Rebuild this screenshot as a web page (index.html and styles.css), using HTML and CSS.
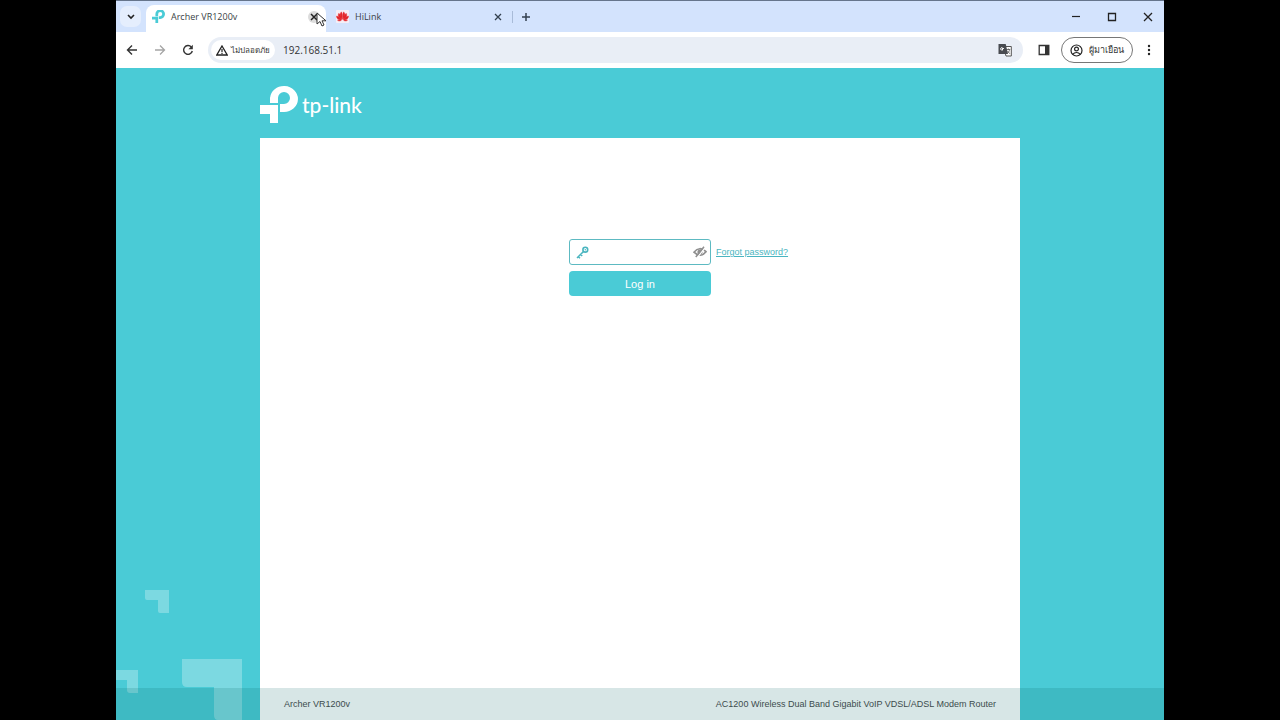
FILE: index.html
```html
<!DOCTYPE html>
<html lang="en">
<head>
    <meta charset="UTF-8">
    <meta name="viewport" content="width=device-width, initial-scale=1.0">
    <title>Archer VR1200v</title>
    <link rel="stylesheet" href="styles.css">
</head>
<body>
    <div class="window">
        <header class="tab-bar">
            <button class="tab-search" aria-label="Search tabs">
                <svg width="8" height="6" viewBox="0 0 8 6"><path d="M1 1l3 3 3-3" fill="none" stroke="#222" stroke-width="1.6"/></svg>
            </button>
            <div class="tab active">
                <svg class="favicon" viewBox="0 0 38 38"><path d="M10 18V12A14 14 0 1 1 24 26H20V18H24A6 6 0 1 0 18 12V18ZM0 20H18V38H10V28H0Z" fill="#4acbd6"/></svg>
                <span class="tab-title">Archer VR1200v</span>
                <button class="tab-close hovered" aria-label="Close tab">
                    <svg width="8" height="8" viewBox="0 0 8 8"><path d="M1 1l6 6M7 1l-6 6" stroke="#222" stroke-width="1.5"/></svg>
                </button>
                <svg class="cursor" width="11" height="16" viewBox="0 0 11 16"><path d="M1 1v11l3-2.500 2 4.500 2-1-2-4.200h4z" fill="#fff" stroke="#333" stroke-width="1"/></svg>
            </div>
            <div class="tab">
                <svg class="favicon" viewBox="0 0 14 14">
                    <rect width="14" height="14" rx="1" fill="#f6eef6"/>
                    <g fill="#e3262b" stroke="#e3262b" stroke-width=".4">
                        <path d="M6.700 10C4 7 3.600 4 5.800 2 7 4 7 7 6.700 10z"/>
                        <path d="M7.300 10C10 7 10.400 4 8.200 2 7 4 7 7 7.300 10z"/>
                        <path d="M6.200 10.200C3 9 1.500 6 3 3.500 5 5 6 8 6.200 10.200z"/>
                        <path d="M7.800 10.200C11 9 12.500 6 11 3.500 9 5 8 8 7.800 10.200z"/>
                        <path d="M5.900 10.700C3 11 .5 9.500.5 6.500 3 7 5 9 5.900 10.700z"/>
                        <path d="M8.100 10.700C11 11 13.500 9.500 13.500 6.500 11 7 9 9 8.100 10.700z"/>
                        <path d="M5.800 11C4 12.500 2.500 12 1.500 10.800z"/>
                        <path d="M8.200 11C10 12.500 11.500 12 12.500 10.800z"/>
                    </g>
                </svg>
                <span class="tab-title">HiLink</span>
                <button class="tab-close" aria-label="Close tab">
                    <svg width="8" height="8" viewBox="0 0 8 8"><path d="M1 1l6 6M7 1l-6 6" stroke="#33404f" stroke-width="1.3"/></svg>
                </button>
            </div>
            <button class="new-tab" aria-label="New tab">
                <svg width="10" height="10" viewBox="0 0 10 10"><path d="M5 1v8M1 5h8" stroke="#33404f" stroke-width="1.5"/></svg>
            </button>
            <div class="window-controls">
                <button aria-label="Minimize"><svg width="10" height="10" viewBox="0 0 10 10"><path d="M1 4.500h8" stroke="#222" stroke-width="1.200"/></svg></button>
                <button aria-label="Maximize"><svg width="10" height="10" viewBox="0 0 10 10"><path d="M1.500 1.500h7v7h-7z" fill="none" stroke="#222" stroke-width="1.300"/></svg></button>
                <button aria-label="Close"><svg width="10" height="10" viewBox="0 0 10 10"><path d="M1 1l8 8M9 1l-8 8" stroke="#222" stroke-width="1.300"/></svg></button>
            </div>
        </header>

        <div class="toolbar">
            <button class="tool" aria-label="Back"><svg width="12" height="12" viewBox="0 0 12 12"><path d="M11 6H2M6 1.500L1.500 6 6 10.500" fill="none" stroke="#333" stroke-width="1.400"/></svg></button>
            <button class="tool" aria-label="Forward"><svg width="12" height="12" viewBox="0 0 12 12"><path d="M1 6h9M6 1.500L10.500 6 6 10.500" fill="none" stroke="#a5a5a5" stroke-width="1.300"/></svg></button>
            <button class="tool" aria-label="Reload"><svg width="12" height="12" viewBox="0 0 12 12"><path d="M10.300 7A4.400 4.400 0 1 1 9.300 3" fill="none" stroke="#333" stroke-width="1.400"/><path d="M10.800.8v4.400H6.400z" fill="#333"/></svg></button>
            <div class="address-bar">
                <button class="site-info">
                    <svg width="12" height="11" viewBox="0 0 12 11"><path d="M6 1L11.200 10H.8z" fill="none" stroke="#222" stroke-width="1.300"/><path d="M6 4v3M6 7.700v1.200" stroke="#222" stroke-width="1.200"/></svg>
                    <span>ไม่ปลอดภัย</span>
                </button>
                <input class="url" type="text" value="192.168.51.1" aria-label="Address">
                <button class="translate" aria-label="Translate this page">
                    <svg width="14" height="14" viewBox="0 0 14 14"><path d="M5.500 3.500h7.800v9.500H8z" fill="#fff" stroke="#555"/><path d="M.5 1h7.200l2.300 10H.5z" fill="#484b50"/><path d="M6 5.500H4v1h1a1.300 1.300 0 1 1-.5-1.800" fill="none" stroke="#fff" stroke-width=".9"/><path d="M8.500 6.500h3.800M10.400 5.500v1M11.500 6.500c0 1.500-1 2.700-2 3.600M9.500 8l2.400 2.800" fill="none" stroke="#555" stroke-width=".8"/></svg>
                </button>
            </div>
            <button class="side-panel" aria-label="Side panel"><svg width="12" height="12" viewBox="0 0 12 12"><path d="M1.200 1.500h9.600v9H1.200z" fill="none" stroke="#333" stroke-width="1.300"/><path d="M7 1h4v10H7z" fill="#333"/></svg></button>
            <button class="profile">
                <svg width="13" height="13" viewBox="0 0 13 13"><g fill="none" stroke="#222" stroke-width="1.200"><circle cx="6.500" cy="6.500" r="5.500"/><circle cx="6.500" cy="5" r="1.900"/><path d="M2.800 10.300c1.700-2.400 5.700-2.400 7.400 0"/></g></svg>
                <span>ผู้มาเยือน</span>
            </button>
            <button class="menu" aria-label="Menu"><svg width="4" height="12" viewBox="0 0 4 12"><g fill="#222"><circle cx="2" cy="2" r="1.200"/><circle cx="2" cy="6" r="1.200"/><circle cx="2" cy="10" r="1.200"/></g></svg></button>
        </div>

        <div class="page">
            <svg class="pattern" width="130" height="134" viewBox="0 0 130 134" aria-hidden="true">
                <g fill="#fff" fill-opacity=".28">
                    <path d="M29 4H53V27H44Q42 27 42 25V14H31Q29 14 29 12Z"/>
                    <path d="M0 84H22V107H14Q11 107 11 104V94H0Z"/>
                    <path d="M66 73H126V134H102Q98 134 98 129V101H71Q66 101 66 96Z"/>
                </g>
            </svg>
            <div class="container">
                <h1 class="logo">
                    <svg width="38" height="38" viewBox="0 0 38 38" aria-hidden="true"><path d="M10 18V13A14 13 0 1 1 24 27H20V19H24A6 6 0 1 0 18 13V18ZM0 20H18V38H10V29H0Z" fill="#fff"/></svg>
                    <span>tp-link</span>
                </h1>
                <main class="panel">
                    <form class="login">
                        <div class="password">
                            <svg class="key" width="13" height="13" viewBox="0 0 13 13"><circle cx="9.300" cy="3.700" r="2.400" fill="none" stroke="#4ab5bf" stroke-width="1.600"/><circle cx="9.300" cy="3.700" r=".7" fill="#4ab5bf"/><path d="M7.500 5.500L1 12M2.300 10.700l1.700 1.500M4.600 8.400l1.600 1.600" fill="none" stroke="#4ab5bf" stroke-width="1.500"/></svg>
                            <input type="password" id="password" aria-label="Password">
                            <button type="button" class="show" id="showPassword" aria-label="Show password">
                                <svg width="14" height="12" viewBox="0 0 14 12"><path d="M1 6.200Q6.500-.5 13 5.700 7.500 12.500 1 6.200z" fill="none" stroke="#8f8f8f" stroke-width="1.700"/><circle cx="7" cy="6" r="2.600" fill="#8f8f8f"/><path d="M4.200 11.500L12.300 1.500" stroke="#fff" stroke-width="1.200"/><path d="M2.800 11L11 .8" stroke="#8f8f8f" stroke-width="1.500"/></svg>
                            </button>
                        </div>
                        <a class="forgot" href="#">Forgot password?</a>
                        <button type="submit" class="submit">Log in</button>
                    </form>
                </main>
            </div>
            <footer class="footer">
                <div class="footer-inner">
                    <span>Archer VR1200v</span>
                    <span>AC1200 Wireless Dual Band Gigabit VoIP VDSL/ADSL Modem Router</span>
                </div>
            </footer>
        </div>
    </div>

    <script>
        // Toggle password visibility
        document.getElementById('showPassword').addEventListener('click', function() {
            const input = document.getElementById('password');
            input.type = input.type === 'password' ? 'text' : 'password';
        });
    </script>
</body>
</html>
```

FILE: styles.css
```css
* {
    margin: 0;
    padding: 0;
    box-sizing: border-box;
}

body {
    background: #000;
    font-family: "Liberation Sans", Arial, sans-serif;
    font-size: 9px;
}

button {
    display: flex;
    align-items: center;
    justify-content: center;
    border: none;
    background: none;
    font-family: inherit;
    cursor: pointer;
}

input {
    border: none;
    outline: none;
    background: none;
    min-width: 0;
}

svg {
    display: block;
    flex-shrink: 0;
}

.window {
    display: flex;
    flex-direction: column;
    min-height: 100vh;
    margin: 0 116px;
}

/* Browser tabs */
.tab-bar,
.toolbar {
    display: flex;
    align-items: center;
    font-family: "Open Sans", "Noto Sans", sans-serif;
    color: #3a3f45;
}

.tab-bar {
    height: 32px;
    background: #d3e3fd;
    border-top: 1px solid #66758c;
}

.tab-search {
    width: 21px;
    height: 21px;
    margin: 0 5px 0 4px;
    border-radius: 7px;
    background: #e5eefd;
}

.tab {
    position: relative;
    display: flex;
    align-items: center;
    width: 184px;
    height: 31px;
    padding: 0 6px 0 10px;
}

.tab.active {
    width: 180px;
    height: 27px;
    margin-top: 4px;
    padding: 0 6px 4px;
    background: #fff;
    border-radius: 8px 8px 0 0;
}

.favicon {
    width: 13px;
    height: 13px;
    margin-right: 6px;
}

.tab-title {
    flex: 1;
}

.tab-close {
    width: 12px;
    height: 12px;
    border-radius: 50%;
}

.tab-close.hovered {
    background: #dcdcdc;
}

.cursor {
    position: absolute;
    left: 170px;
    top: 7px;
    z-index: 1;
}

.new-tab {
    height: 12px;
    margin-left: 2px;
    padding-left: 8px;
    border-left: 1px solid #a8bbd8;
}

.window-controls {
    display: flex;
    gap: 26px;
    margin-left: auto;
    padding-right: 11px;
}

/* Address bar */
.toolbar {
    height: 36px;
    padding: 0 13px 0 10px;
    background: #fff;
}

.tool {
    width: 12px;
    height: 12px;
    margin-right: 16px;
}

.address-bar {
    display: flex;
    flex: 1;
    align-items: center;
    height: 26px;
    margin-left: -2px;
    padding: 0 11px 0 3px;
    border-radius: 13px;
    background: #e9eef6;
}

.site-info {
    gap: 3px;
    height: 20px;
    padding: 0 5px;
    border-radius: 10px;
    background: #fff;
    color: #333;
    font-size: 8px;
}

.url {
    flex: 1;
    margin-left: 8px;
    font-family: inherit;
    font-size: 10px;
    color: #333;
}

.side-panel {
    margin: 0 11px 0 15px;
}

.profile {
    gap: 6px;
    height: 26px;
    padding: 0 8px;
    border: 1px solid #777;
    border-radius: 13px;
    color: #333;
    font-size: 9px;
}

.menu {
    margin-left: 14px;
}

/* Router login page */
.page {
    position: relative;
    display: flex;
    flex: 1;
    justify-content: center;
    background: #4acbd6;
}

.pattern {
    position: absolute;
    left: 0;
    bottom: 0;
}

.container {
    display: flex;
    flex-direction: column;
    width: 760px;
}

.logo {
    display: flex;
    align-items: center;
    gap: 4px;
    height: 70px;
    padding-top: 2px;
    color: #fff;
    font-family: Lato, sans-serif;
    font-size: 21px;
    font-weight: 500;
}

.panel {
    flex: 1;
    padding: 101px 16px 32px;
    background: #fff;
}

.login {
    display: grid;
    grid-template-columns: 1fr 142px 1fr;
    row-gap: 6px;
    column-gap: 5px;
    align-items: center;
}

.password {
    display: flex;
    grid-column: 2;
    align-items: center;
    height: 26px;
    padding: 0 3px 0 6px;
    border: 1px solid #5dbac2;
    border-radius: 3px;
}

.password input {
    flex: 1;
    height: 20px;
    padding: 0 4px;
}

.forgot {
    color: #4ab5c0;
}

.submit {
    grid-column: 2;
    height: 25px;
    border-radius: 4px;
    background: #4acbd6;
    color: #fff;
    font-size: 11px;
}

.footer {
    position: absolute;
    left: 0;
    right: 0;
    bottom: 0;
    background: rgba(3, 95, 95, 0.155);
}

.footer-inner {
    display: flex;
    align-items: center;
    justify-content: space-between;
    width: 760px;
    height: 32px;
    margin: 0 auto;
    padding: 0 24px;
    color: #3c4c4d;
}
```
